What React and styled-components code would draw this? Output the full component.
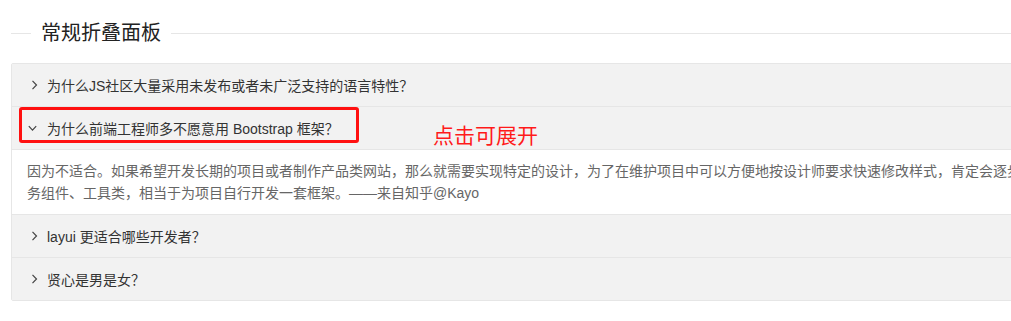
import React, { useState } from "react";
import styled, { createGlobalStyle } from "styled-components";

const Global = createGlobalStyle`
  html, body { margin: 0; padding: 0; background: #fff; overflow: hidden; }
  body {
    font-family: "Liberation Sans", Arial, "Noto Sans CJK SC", sans-serif;
    color: #333;
  }
`;

const Page = styled.div`
  padding: 18px 0 0 11px;
  width: 1200px;
`;

const Legend = styled.div`
  display: flex;
  align-items: center;
  height: 30px;
  width: 1000px;
`;

const Line = styled.div`
  height: 1px;
  background: #e6e6e6;
  flex: ${(p) => (p.$grow ? 1 : "0 0 20px")};
`;

const LegendText = styled.span`
  padding: 0 10px;
  font-size: 20px;
  line-height: 30px;
  color: #222;
`;

const Collapse = styled.div`
  margin-top: 15px;
  width: 1112px;
  border: 1px solid #e6e6e6;
  border-radius: 2px;
`;

const Item = styled.div`
  position: relative;
  border-top: ${(p) => (p.$first ? "none" : "1px solid #e6e6e6")};
`;

const Title = styled.div`
  display: flex;
  align-items: center;
  height: 42px;
  padding: 0 15px 0 ${(p) => (p.$open ? "16px" : "19px")};
  background: #f2f2f2;
  color: #333;
  font-size: 14px;
  cursor: pointer;
  white-space: nowrap;
`;

const ArrowSlot = styled.span`
  display: flex;
  align-items: center;
  width: ${(p) => (p.$open ? "19px" : "16px")};
  flex: none;
`;

const Arrow = styled.svg`
  display: block;
  width: ${(p) => (p.$open ? "9px" : "7px")};
  height: ${(p) => (p.$open ? "7px" : "10px")};
`;

const Content = styled.div`
  border-top: 1px solid #e6e6e6;
  padding: 10px 15px;
  line-height: 22px;
  font-size: 14px;
  color: #666;
`;

const Highlight = styled.div`
  position: absolute;
  left: 7px;
  top: 0;
  width: 340px;
  height: 36px;
  box-sizing: border-box;
  border: 3px solid #ff1010;
  border-radius: 3px;
  pointer-events: none;
`;

const Note = styled.div`
  position: absolute;
  left: 421px;
  top: 13px;
  font-size: 21px;
  line-height: 28px;
  color: #ff1a1a;
  font-family: "Noto Sans CJK SC", sans-serif;
  pointer-events: none;
`;

const items = [
  { title: "为什么JS社区大量采用未发布或者未广泛支持的语言特性？", body: "" },
  {
    title: "为什么前端工程师多不愿意用 Bootstrap 框架？",
    body: "因为不适合。如果希望开发长期的项目或者制作产品类网站，那么就需要实现特定的设计，为了在维护项目中可以方便地按设计师要求快速修改样式，肯定会逐步编写出各种业务组件、工具类，相当于为项目自行开发一套框架。——来自知乎@Kayo",
    note: true,
  },
  { title: "layui 更适合哪些开发者？", body: "" },
  { title: "贤心是男是女？", body: "" },
];

function Chevron({ open }) {
  return (
    <ArrowSlot $open={open}>
      {open ? (
        <Arrow $open viewBox="0 0 9 7">
          <path d="M0.8 1.2 L4.5 5.2 L8.2 1.2" fill="none" stroke="#444" strokeWidth="1.2" />
        </Arrow>
      ) : (
        <Arrow viewBox="0 0 7 10">
          <path d="M1.5 0.8 L5.5 5 L1.5 9.2" fill="none" stroke="#444" strokeWidth="1.2" />
        </Arrow>
      )}
    </ArrowSlot>
  );
}

export default function App() {
  const [open, setOpen] = useState(1);
  return (
    <Page>
      <Global />
      <Legend>
        <Line />
        <LegendText>常规折叠面板</LegendText>
        <Line $grow />
      </Legend>
      <Collapse>
        {items.map((it, i) => (
          <Item key={i} $first={i === 0}>
            <Title $open={open === i} onClick={() => setOpen(open === i ? -1 : i)}>
              <Chevron open={open === i} />
              {it.title}
            </Title>
            {open === i && it.body && <Content>{it.body}</Content>}
            {it.note && (
              <>
                <Highlight />
                <Note>点击可展开</Note>
              </>
            )}
          </Item>
        ))}
      </Collapse>
    </Page>
  );
}
